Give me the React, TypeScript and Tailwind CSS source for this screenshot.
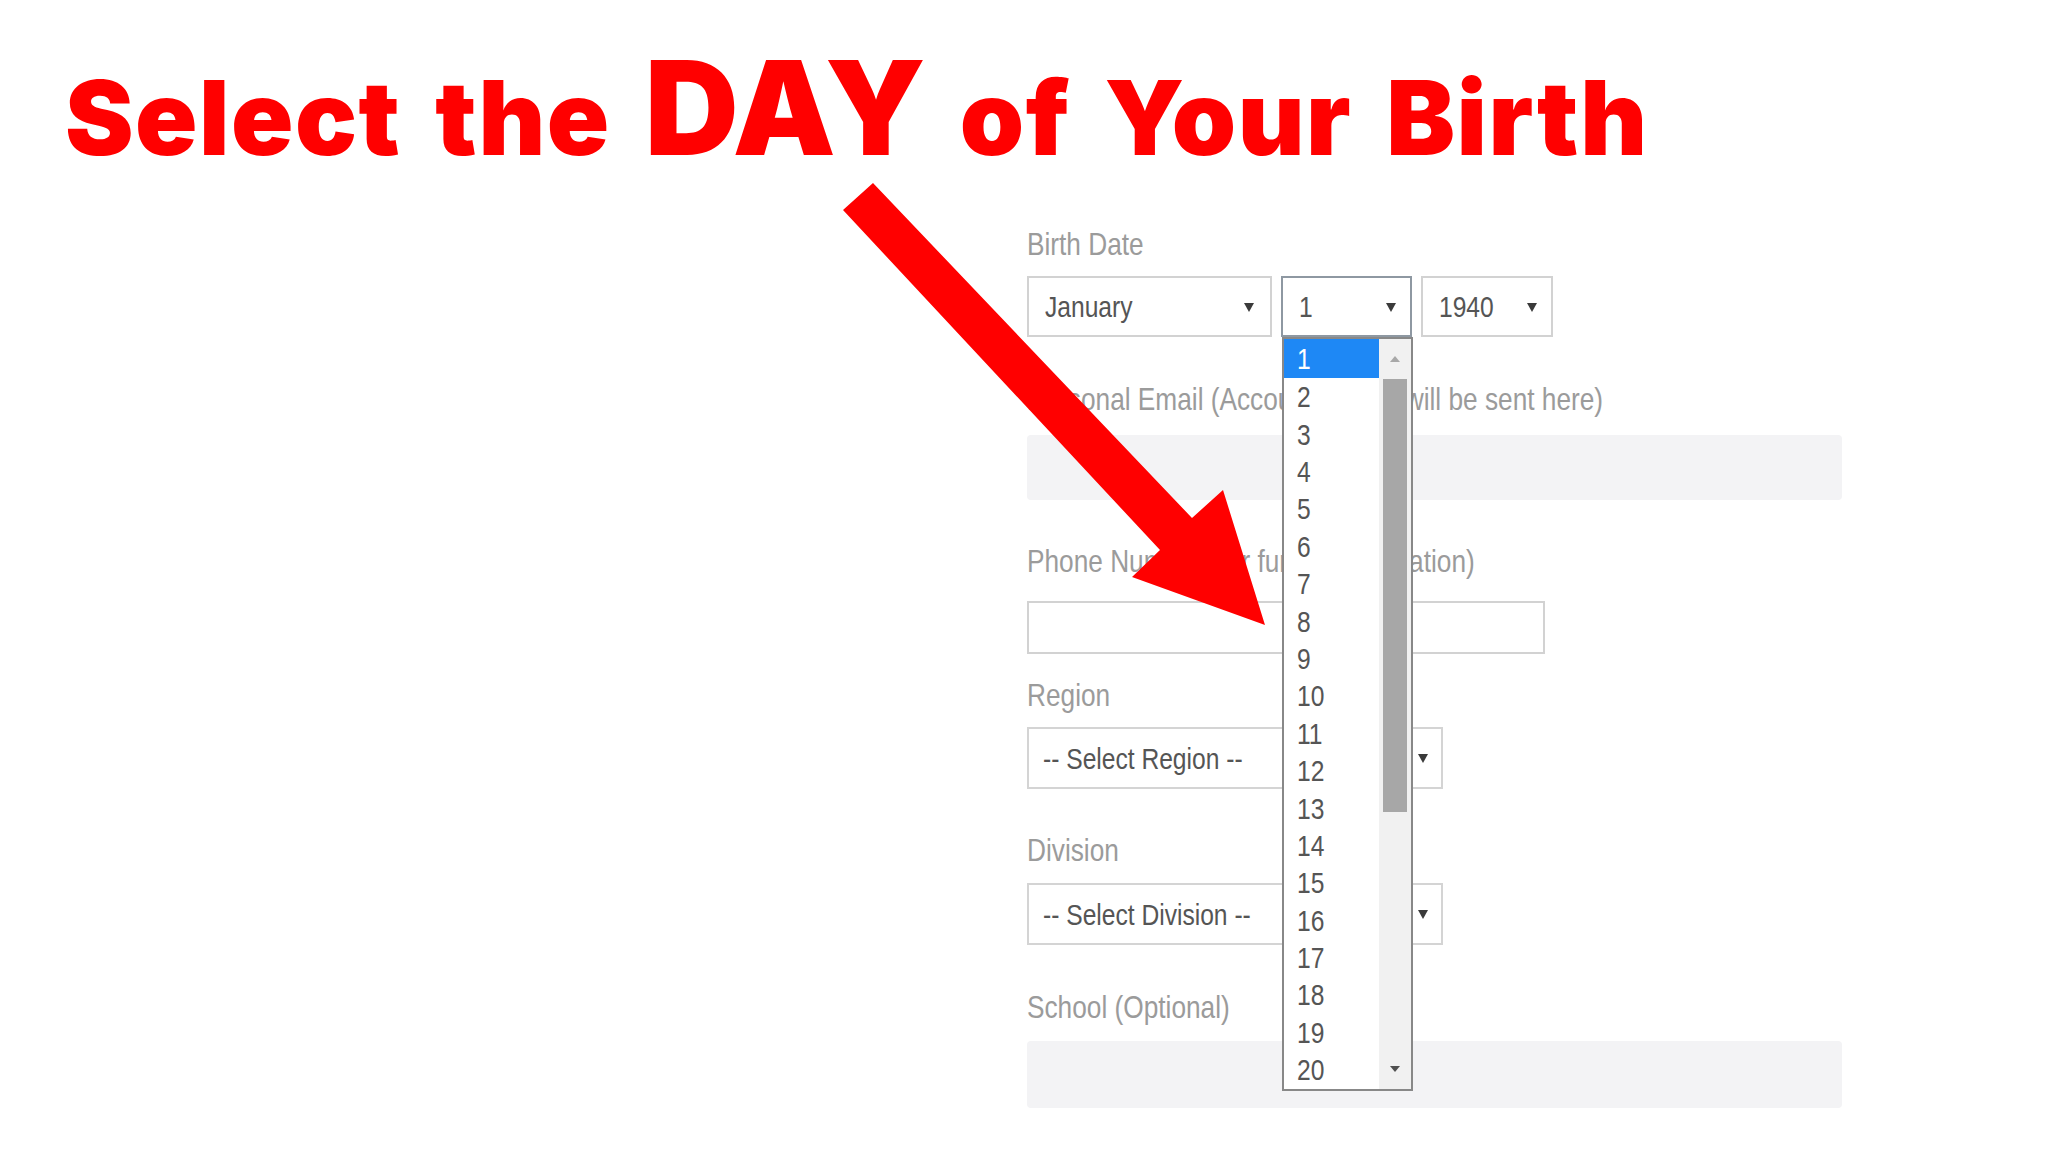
import React from "react";

const formFont = { fontFamily: '"Liberation Sans", Arial, sans-serif' };

const days = Array.from({ length: 20 }, (_, i) => i + 1);

// the form screenshot is narrow type, squeeze Liberation Sans to match
function Narrow({ children }: { children: React.ReactNode }) {
  return <span className="inline-block origin-left whitespace-nowrap [transform:scaleX(0.82)]">{children}</span>;
}

function Caret() {
  return (
    <svg viewBox="0 0 10 10" className="h-[10px] w-[10px] shrink-0">
      <polygon points="0,1 10,1 5,10" fill="#3a3a3a" />
    </svg>
  );
}

function FakeSelect({
  value,
  width,
  focused = false,
  caretPad = "pr-[16px]",
}: {
  value: string;
  width: string;
  focused?: boolean;
  caretPad?: string;
}) {
  return (
    <div
      className={`flex h-[61px] ${width} items-center justify-between border-2 bg-white pl-[16px] ${caretPad} text-[30px] text-[#555] ${
        focused ? "border-[#8e98a2]" : "border-[#d2d2d2]"
      }`}
    >
      <Narrow>{value}</Narrow>
      <Caret />
    </div>
  );
}

function Label({ children, className = "" }: { children: React.ReactNode; className?: string }) {
  return (
    <div className={`h-[36px] whitespace-nowrap text-[32px] leading-[36px] text-[#9b9b9b] ${className}`}>
      <Narrow>{children}</Narrow>
    </div>
  );
}

function DayList() {
  return (
    <div className="absolute left-[1282px] top-[337px] flex h-[754px] w-[131px] border-2 border-[#888] bg-white" style={formFont}>
      <ul className="w-[95px]">
        {days.map((d) => (
          <li
            key={d}
            className={`flex items-center pl-[13px] text-[30px] ${
              d === 1 ? "h-[39px] bg-[#1e88f5] text-white" : "h-[37.4px] text-[#555]"
            }`}
          >
            <Narrow>{d}</Narrow>
          </li>
        ))}
      </ul>
      <div className="flex w-[32px] flex-col bg-[#f1f1f1]">
        <div className="flex h-[40px] items-center justify-center">
          <svg viewBox="0 0 10 6" className="h-[6px] w-[10px]">
            <polygon points="0,6 10,6 5,0" fill="#a8a8a8" />
          </svg>
        </div>
        <div className="mx-[4px] h-[433px] bg-[#a7a7a7]" />
        <div className="flex-1" />
        <div className="flex h-[40px] items-center justify-center">
          <svg viewBox="0 0 10 6" className="h-[6px] w-[10px]">
            <polygon points="0,0 10,0 5,6" fill="#505050" />
          </svg>
        </div>
      </div>
    </div>
  );
}

export default function App() {
  return (
    <div className="relative h-[1152px] w-[2048px] overflow-hidden bg-white">
      <div className="h-[226px] pl-[65px] pt-[43px]">
        <h1
          className="whitespace-nowrap text-[103px] font-black leading-none tracking-[1.5px] text-[#ff0000] [word-spacing:12px]"
          style={{ fontFamily: "Inter, Roboto, sans-serif" }}
        >
          Select the <span className="text-[130px] tracking-normal">DAY</span> of Your Birth
        </h1>
      </div>

      <div className="ml-[1027px] flex flex-col" style={formFont}>
        <Label>Birth Date</Label>
        <div className="mt-[14px] flex gap-[9px]">
          <FakeSelect value="January" width="w-[245px]" caretPad="pr-[16px]" />
          <FakeSelect value="1" width="w-[131px]" focused caretPad="pr-[14px]" />
          <FakeSelect value="1940" width="w-[132px]" caretPad="pr-[14px]" />
        </div>

        <Label className="mt-[44px]">Personal Email (Account details will be sent here)</Label>
        <div className="mt-[18px] h-[65px] w-[815px] rounded-[4px] bg-[#f3f3f5]" />

        <Label className="mt-[43px]">Phone Number (for further verification)</Label>
        <div className="mt-[22px] h-[53px] w-[518px] border-2 border-[#d2d2d2] bg-white" />

        <Label className="mt-[23px]">Region</Label>
        <div className="mt-[14px] flex h-[62px] w-[416px] items-center justify-between border-2 border-[#d4d4d4] pl-[14px] pr-[13px] text-[30px] text-[#555]">
          <Narrow>-- Select Region --</Narrow>
          <Caret />
        </div>

        <Label className="mt-[43px]">Division</Label>
        <div className="mt-[15px] flex h-[62px] w-[416px] items-center justify-between border-2 border-[#d4d4d4] pl-[14px] pr-[13px] text-[30px] text-[#555]">
          <Narrow>-- Select Division --</Narrow>
          <Caret />
        </div>

        <Label className="mt-[44px]">School (Optional)</Label>
        <div className="mt-[16px] h-[67px] w-[815px] rounded-[4px] bg-[#f3f3f5]" />
      </div>

      <svg className="pointer-events-none absolute left-0 top-0 h-[1152px] w-[2048px]" viewBox="0 0 2048 1152">
        <polygon points="873,183 1192,518 1223,490 1265,625 1132,577 1160,550 843,210" fill="#ff0000" />
      </svg>

      <DayList />
    </div>
  );
}
